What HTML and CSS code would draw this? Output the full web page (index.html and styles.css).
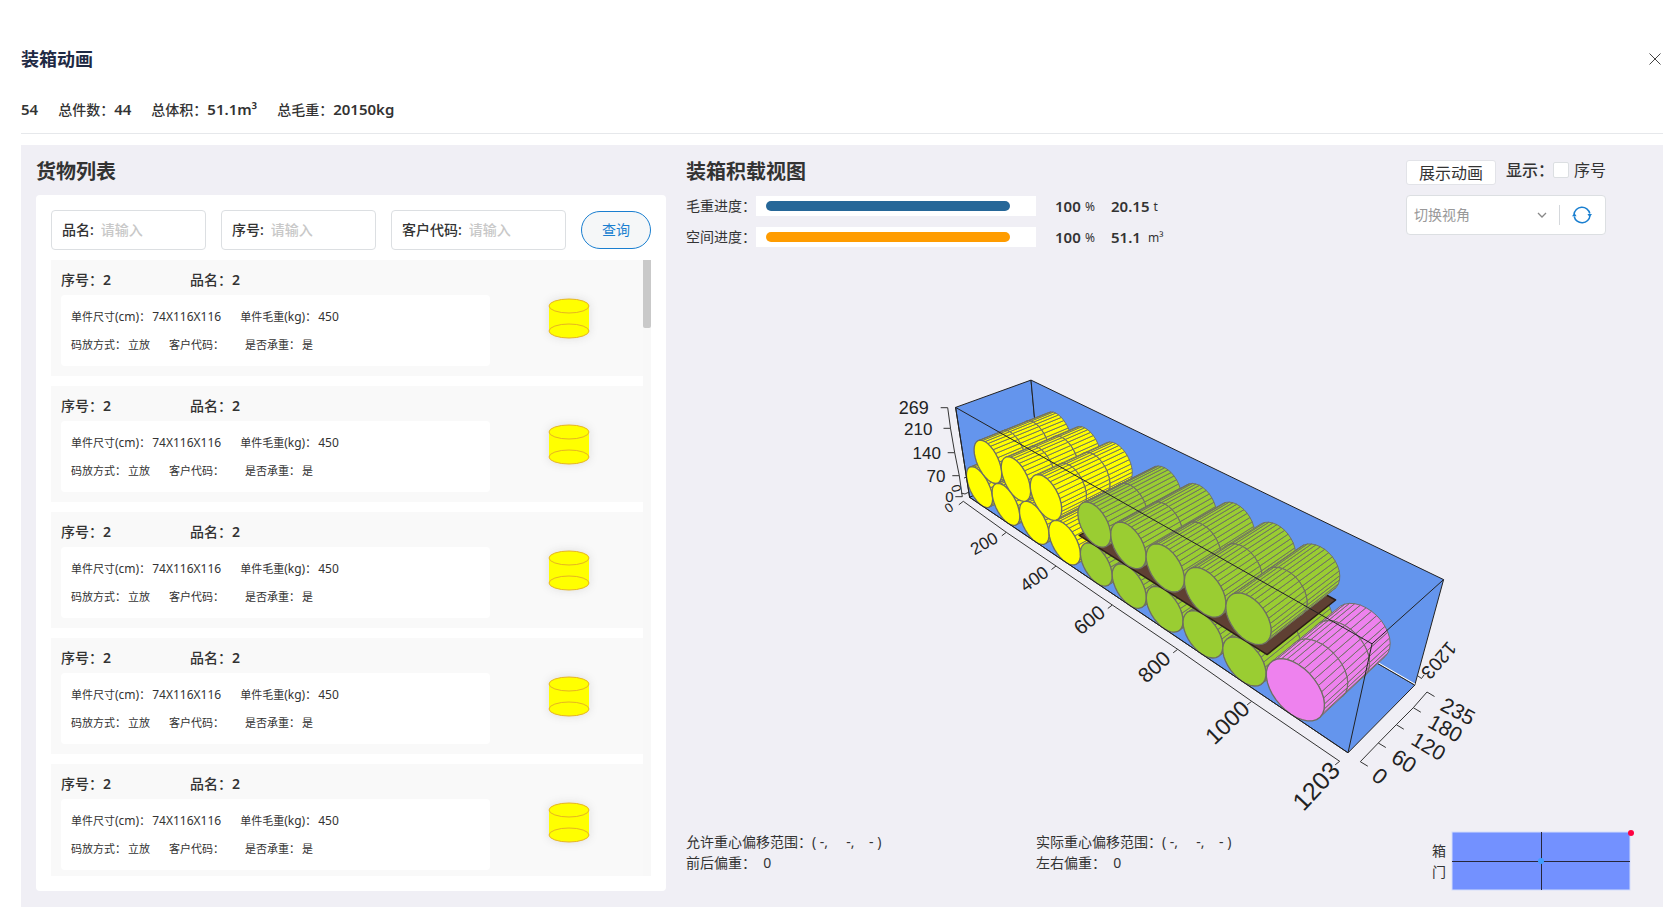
FILE: index.html
```
<!DOCTYPE html>
<html lang="zh-CN">
<head>
<meta charset="utf-8">
<title>装箱动画</title>
<link rel="stylesheet" href="styles.css">
</head>
<body>
<svg class="defs" aria-hidden="true">
  <symbol id="drum" viewBox="0 0 52 52">
    <path d="M6 14V38H46V14Z" fill="#ffff00"/>
    <ellipse cx="26" cy="13" rx="20" ry="7" fill="#ffff00" stroke="#e6b422"/>
    <ellipse cx="26" cy="38" rx="20" ry="7" fill="#ffff00" stroke="#e6b422"/>
  </symbol>
</svg>
<header class="header">
  <h1 class="title">装箱动画</h1>
  <button class="close" type="button" aria-label="关闭"><svg width="12" height="12" viewBox="0 0 12 12"><path d="M0.5 0.5 11.5 11.5M11.5 0.5 0.5 11.5" stroke="#444" fill="none"/></svg></button>
</header>
<div class="summary">
  <b>54</b>
  <span>总件数：<b>44</b></span>
  <span>总体积：<b>51.1m³</b></span>
  <span>总毛重：<b>20150kg</b></span>
</div>
<main class="panel">
  <section class="goods">
    <h2 class="heading">货物列表</h2>
    <div class="card">
      <form class="filters">
        <label class="field">品名:<input type="text" placeholder="请输入"></label>
        <label class="field">序号:<input type="text" placeholder="请输入"></label>
        <label class="field field-wide">客户代码:<input type="text" placeholder="请输入"></label>
        <button class="query" type="button">查询</button>
      </form>
      <div class="list-wrap">
        <ul class="list">
          <li class="item">
            <div class="item-main">
              <div class="item-head"><span>序号：<b>2</b></span><span>品名：<b>2</b></span></div>
              <div class="item-box">
                <p class="row"><span>单件尺寸<i>(cm)</i>：<i>74X116X116</i></span><span>单件毛重<i>(kg)</i>：<i>450</i></span></p>
                <p class="row"><span>码放方式：<em>立放</em></span><span class="customer">客户代码：</span><span>是否承重：<em>是</em></span></p>
              </div>
            </div>
            <svg class="drum"><use href="#drum"/></svg>
          </li>
          <li class="item">
            <div class="item-main">
              <div class="item-head"><span>序号：<b>2</b></span><span>品名：<b>2</b></span></div>
              <div class="item-box">
                <p class="row"><span>单件尺寸<i>(cm)</i>：<i>74X116X116</i></span><span>单件毛重<i>(kg)</i>：<i>450</i></span></p>
                <p class="row"><span>码放方式：<em>立放</em></span><span class="customer">客户代码：</span><span>是否承重：<em>是</em></span></p>
              </div>
            </div>
            <svg class="drum"><use href="#drum"/></svg>
          </li>
          <li class="item">
            <div class="item-main">
              <div class="item-head"><span>序号：<b>2</b></span><span>品名：<b>2</b></span></div>
              <div class="item-box">
                <p class="row"><span>单件尺寸<i>(cm)</i>：<i>74X116X116</i></span><span>单件毛重<i>(kg)</i>：<i>450</i></span></p>
                <p class="row"><span>码放方式：<em>立放</em></span><span class="customer">客户代码：</span><span>是否承重：<em>是</em></span></p>
              </div>
            </div>
            <svg class="drum"><use href="#drum"/></svg>
          </li>
          <li class="item">
            <div class="item-main">
              <div class="item-head"><span>序号：<b>2</b></span><span>品名：<b>2</b></span></div>
              <div class="item-box">
                <p class="row"><span>单件尺寸<i>(cm)</i>：<i>74X116X116</i></span><span>单件毛重<i>(kg)</i>：<i>450</i></span></p>
                <p class="row"><span>码放方式：<em>立放</em></span><span class="customer">客户代码：</span><span>是否承重：<em>是</em></span></p>
              </div>
            </div>
            <svg class="drum"><use href="#drum"/></svg>
          </li>
          <li class="item">
            <div class="item-main">
              <div class="item-head"><span>序号：<b>2</b></span><span>品名：<b>2</b></span></div>
              <div class="item-box">
                <p class="row"><span>单件尺寸<i>(cm)</i>：<i>74X116X116</i></span><span>单件毛重<i>(kg)</i>：<i>450</i></span></p>
                <p class="row"><span>码放方式：<em>立放</em></span><span class="customer">客户代码：</span><span>是否承重：<em>是</em></span></p>
              </div>
            </div>
            <svg class="drum"><use href="#drum"/></svg>
          </li>
        </ul>
        <div class="track"><div class="thumb"></div></div>
      </div>
    </div>
  </section>
  <section class="view">
    <div class="view-top">
      <div>
        <h2 class="heading">装箱积载视图</h2>
        <div class="meters">
          <div class="meter"><span class="meter-name">毛重进度：</span><div class="bar"><div class="fill weight"></div></div><b class="percent">100</b><small class="unit">%</small><b class="amount">20.15</b><small>t</small></div>
          <div class="meter"><span class="meter-name">空间进度：</span><div class="bar"><div class="fill volume"></div></div><b class="percent">100</b><small class="unit">%</small><b class="amount">51.1</b><small>m³</small></div>
        </div>
      </div>
      <div class="controls">
        <div class="controls-row">
          <button class="play" type="button">展示动画</button>
          <b class="show">显示：</b>
          <label class="check"><input type="checkbox">序号</label>
        </div>
        <div class="angle">
          <select class="angle-select" aria-label="切换视角"><option>切换视角</option></select>
          <svg class="chevron" width="10" height="6" viewBox="0 0 10 6"><path d="M1 1 5 5 9 1" fill="none" stroke="#888" stroke-width="1.3"/></svg>
          <button class="refresh" type="button" aria-label="刷新"><svg width="20" height="18" viewBox="0 0 20 18"><path d="M2 8.5A8 8 0 0 1 17.8 7.5M18 9.5A8 8 0 0 1 2.2 10.5" fill="none" stroke="#1a7fd0" stroke-width="1.5"/><path d="M0 10.3 2.4 7 4.6 10.3ZM15.4 8 17.6 11.3 20 8Z" fill="#1a7fd0"/></svg></button>
        </div>
      </div>
    </div>
    <div class="stage"><svg class="scene" id="scene" viewBox="854 370 640 450" width="640" role="img" aria-label="装箱三维视图"></svg></div>
    <footer class="balance">
      <div class="balance-col"><p>允许重心偏移范围：( -,&nbsp;&nbsp;&nbsp;&nbsp; -,&nbsp;&nbsp;&nbsp; - )</p><p>前后偏重：&nbsp; 0</p></div>
      <div class="balance-col"><p>实际重心偏移范围：( -,&nbsp;&nbsp;&nbsp;&nbsp; -,&nbsp;&nbsp;&nbsp; - )</p><p>左右偏重：&nbsp; 0</p></div>
      <div class="door"><span class="door-name">箱门</span>
        <svg width="184" height="64" viewBox="0 0 184 64"><rect x="2" y="5" width="178" height="58" fill="#7391ff" stroke="#d3ddfb"/><path d="M91.500 5V63M2 34.500H180" stroke="#26263a"/><circle cx="91" cy="34" r="3" fill="#409eff"/><circle cx="181" cy="6" r="3" fill="#ff0040"/></svg>
      </div>
    </footer>
  </section>
</main>
<script src="scene.js"></script>
</body>
</html>
```

FILE: styles.css
```
* { box-sizing: border-box; }
body { margin: 0; height: 100vh; display: flex; flex-direction: column; overflow: hidden; background: #fff; color: #333; font: 14px/20px "Noto Sans", "Noto Sans CJK SC", sans-serif; }
h1, h2, p, ul { margin: 0; padding: 0; }
button, input, select { font: inherit; color: inherit; }
i, em { font-style: normal; }
b { font-weight: 600; }
.defs { position: absolute; width: 0; height: 0; }
.header { display: flex; justify-content: space-between; align-items: center; padding: 44px 0 0 21px; }
.title { font-size: 18px; line-height: 30px; font-weight: 600; color: #1f2a44; }
.close { display: flex; border: 0; padding: 2px; background: none; }
.summary { display: flex; gap: 20px; align-items: center; margin-left: 21px; height: 60px; padding-top: 11px; border-bottom: 1px solid #e6e8eb; font-weight: 500; }
.summary b { font-size: 15px; }
.panel { flex: 1; min-height: 0; display: flex; gap: 20px; margin: 11px 0 0 21px; padding: 0 0 16px 15px; background: #f0eff5; }
.heading { height: 50px; padding-top: 1px; font-size: 20px; line-height: 52px; font-weight: 600; }
.goods { width: 630px; display: flex; flex-direction: column; min-height: 0; }
.card { flex: 1; min-height: 0; display: flex; flex-direction: column; gap: 10px; padding: 15px; background: #fff; border-radius: 4px; }
.filters { display: flex; gap: 15px; align-items: center; }
.field { display: flex; align-items: center; gap: 7px; flex: 1 1 155px; min-width: 0; height: 40px; padding-left: 10px; border: 1px solid #dcdfe2; border-radius: 4px; font-weight: 500; white-space: nowrap; }
.field-wide { flex-basis: 175px; }
.field input { flex: 1; min-width: 0; border: 0; padding: 0; outline: 0; background: none; }
.field input::placeholder { color: #c8c8c8; }
.query { width: 70px; height: 38px; border: 1px solid #1a7fd0; border-radius: 19px; background: #f5f7f8; color: #1a7fd0; }
.list-wrap { flex: 1; min-height: 0; display: flex; }
.list { flex: 1; list-style: none; overflow: hidden; display: flex; flex-direction: column; gap: 10px; }
.item { flex: none; display: flex; gap: 53px; padding: 10px; height: 116px; background: #f9f9f9; }
.item-main { width: 429px; display: flex; flex-direction: column; }
.item-head { flex: none; display: flex; height: 25px; font-weight: 500; }
.item-head span { width: 129px; }
.item-box { flex: 1; display: flex; flex-direction: column; padding: 8px 10px 7px; background: #fff; border-radius: 4px; }
.row { display: flex; gap: 19px; font-size: 11px; line-height: 28px; }
.row i { font-size: 12px; }
.row i:last-child, .row em { margin-left: 2px; }
.customer { width: 57px; }
.drum { width: 52px; height: 52px; margin-top: 23px; filter: drop-shadow(0 0 4px #ddd); }
.track { width: 8px; background: #f8f8f8; }
.thumb { height: 68px; background: #c9c9c9; border-radius: 0 0 2px 2px; }
.view { flex: 1; min-width: 0; display: flex; flex-direction: column; }
.view-top { display: flex; justify-content: space-between; padding-right: 57px; }
.meters { display: flex; flex-direction: column; gap: 11px; padding-top: 1px; }
.meter { display: flex; align-items: center; height: 20px; }
.meter-name { width: 70px; }
.bar { width: 280px; height: 20px; padding: 5px 26px 5px 10px; background: #fff; }
.fill { height: 10px; border-radius: 5px; }
.weight { background: #266798; }
.volume { background: #ff9c00; }
.meter b { font-size: 15px; }
.meter small { font-size: 12px; padding-top: 2px; }
.percent { margin-left: 19px; width: 30px; }
.unit { width: 26px; }
.amount { margin-right: 4px; min-width: 33px; }
.controls { width: 200px; padding-top: 14px; font-size: 16px; }
.controls-row { display: flex; align-items: center; height: 26px; }
.play { width: 90px; height: 25px; padding: 0; border: 1px solid #e2e3e8; border-radius: 3px; background: #fff; line-height: 24px; }
.show { margin-left: 10px; width: 47px; white-space: nowrap; font-weight: 500; line-height: 16px; padding-bottom: 4px; }
.check { display: flex; align-items: center; gap: 5px; white-space: nowrap; padding-bottom: 4px; }
.check input { appearance: none; width: 16px; height: 16px; margin: 0; border: 1px solid #dcdfe2; border-radius: 2px; background: #fff; }
.angle { display: flex; align-items: center; height: 40px; margin-top: 10px; padding-left: 7px; border: 1px solid #dcdfe2; border-radius: 4px; background: #fff; }
.angle-select { flex: 1; appearance: none; border: 0; padding: 0; outline: 0; background: none; color: #999; font-size: 14px; }
.chevron { margin-right: 12px; }
.refresh { display: flex; align-items: center; height: 20px; width: 46px; padding: 0 0 0 12px; border: 0; border-left: 1px solid #d5d8dc; background: none; }
.stage { flex: 1; min-height: 0; display: flex; justify-content: center; align-items: flex-end; padding-right: 1px; }
.scene { display: block; height: auto; margin-bottom: 8px; }
.balance { display: flex; align-items: flex-end; padding-right: 29px; line-height: 21px; }
.balance-col { width: 350px; padding-bottom: 18px; white-space: nowrap; }
.door { display: flex; align-items: center; gap: 4px; margin-left: auto; height: 64px; }
.door-name { width: 14px; padding-top: 4px; }
```

FILE: scene.js
```
// Container size in cm: length (x), depth (y), height (z)
const L = 1203, D = 235, H = 269;

// Container corners [x, y, z, screen x, screen y]
const corners = [
  [0, 0, H, 955.7, 408.7], [0, D, H, 1031, 380.7], [0, 0, 0, 969.5, 497.8],
  [L, 0, 0, 1348.3, 753.7], [L, 0, H, 1371.7, 645.3], [L, D, H, 1443.7, 580.3],
  [L, D, 0, 1414.7, 686], [0, D, 0, 1039, 468]
];

// Least-squares solution of the perspective camera for those corners
function solveCamera() {
  const A = Array.from({ length: 11 }, () => new Array(12).fill(0));
  const add = (r, v) => { for (let i = 0; i < 11; i++) { for (let j = 0; j < 11; j++) A[i][j] += r[i] * r[j]; A[i][11] += r[i] * v; } };
  for (const [x0, y0, z0, u0, v0] of corners) {
    const x = x0 / 1000, y = y0 / 1000, z = z0 / 1000, u = (u0 - 1200) / 250, v = (v0 - 570) / 250;
    add([x, y, z, 1, 0, 0, 0, 0, -u * x, -u * y, -u * z], u);
    add([0, 0, 0, 0, x, y, z, 1, -v * x, -v * y, -v * z], v);
  }
  for (let i = 0; i < 11; i++) {
    let p = i;
    for (let k = i + 1; k < 11; k++) if (Math.abs(A[k][i]) > Math.abs(A[p][i])) p = k;
    [A[i], A[p]] = [A[p], A[i]];
    for (let k = 0; k < 11; k++) {
      if (k === i) continue;
      const f = A[k][i] / A[i][i];
      for (let j = i; j < 12; j++) A[k][j] -= f * A[i][j];
    }
  }
  return A.map((r, i) => r[11] / r[i]);
}
const m = solveCamera();
function project(x, y, z) {
  x /= 1000; y /= 1000; z /= 1000;
  const w = m[8] * x + m[9] * y + m[10] * z + 1;
  return [(m[0] * x + m[1] * y + m[2] * z + m[3]) / w * 250 + 1200, (m[4] * x + m[5] * y + m[6] * z + m[7]) / w * 250 + 570];
}

const out = [];
const pts = list => list.map(p => p[0].toFixed(1) + ',' + p[1].toFixed(1)).join(' ');
const poly = (list, fill, stroke, width = 1) => out.push(`<polygon points="${pts(list)}" fill="${fill}" stroke="${stroke}" stroke-width="${width}" stroke-linejoin="round"/>`);
const line = (list, stroke = '#222', width = 1) => out.push(`<polyline points="${pts(list)}" fill="none" stroke="${stroke}" stroke-width="${width}"/>`);
const area = q => q.reduce((s, p, i) => { const n = q[(i + 1) % q.length]; return s + p[0] * n[1] - n[0] * p[1]; }, 0);

function cylinder(cx, cz, r, y0, y1, fill) {
  const N = 32, front = [], back = [];
  for (let i = 0; i < N; i++) {
    const a = i * 2 * Math.PI / N, x = cx + r * Math.cos(a), z = cz + r * Math.sin(a);
    front.push(project(x, y0, z));
    back.push(project(x, y1, z));
  }
  for (let i = 0; i < N; i++) {
    const j = (i + 1) % N, q = [front[i], back[i], back[j], front[j]];
    if (area(q) < 0) poly(q, fill, '#6e6e62', 0.9);
  }
  poly(front, fill, '#6e6e62', 1.3);
}
function stack(cx, cz, r, depth, count, fill) {
  for (let k = count - 1; k >= 0; k--) cylinder(cx, cz, r, k * depth, (k + 1) * depth, fill);
}

// Container inner faces
const P = project, blue = '#6495ed', edge = '#222';
poly([P(0, 0, 0), P(0, D, 0), P(0, D, H), P(0, 0, H)], blue, edge);
poly([P(0, D, 0), P(L, D, 0), P(L, D, H), P(0, D, H)], blue, edge);
poly([P(0, 0, 0), P(L, 0, 0), P(L, D, 0), P(0, D, 0)], blue, edge);
line([P(0, D, 2), P(L, D, 2)], '#fff', 1.5);
line([P(0, D, 0), P(L, D, 0)]);

// Cargo
const ry = 58, rg = 54.5, rp = 66, x0 = 464, xg = x0 + 10 * rg;
for (let i = 0; i < 4; i++) stack(ry + i * 2 * ry, ry, ry, 74, 3, '#ffff00');
for (let i = 0; i < 3; i++) stack(2 * ry + i * 2 * ry, ry + ry * Math.sqrt(3), ry, 74, 3, '#ffff00');
for (let i = 0; i < 5; i++) stack(x0 + rg + i * 2 * rg, rg, rg, 110, 2, '#9acd32');
const zp = 2 * rg, xe = xg - 3, dp = 224;
poly([P(x0, 0, zp), P(xe, 0, zp), P(xe, dp, zp), P(x0, dp, zp)], '#5f4033', '#2b1d17', 1.5);
for (let i = 0; i < 5; i++) stack(x0 + rg + i * 2 * rg, zp + 2 + rg, rg, 110, 2, '#9acd32');
stack(xg + rp, rp, rp, 74, 3, '#ee82ee');

// Front edges of the container
line([P(0, 0, H), P(L, 0, H), P(L, D, H)]);
line([P(L, 0, H), P(L, 0, 0)]);
line([P(0, 0, H), P(0, 0, 0), P(L, 0, 0)]);

// Axes: points along the axis and the tick direction
function axis(points, dx, dy) {
  line(points, '#333');
  for (const [x, y] of points) line([[x, y], [x + dx, y + dy]], '#333');
}
axis([[947.7, 408.7], [950.5, 429.3], [954.7, 453.7], [959.3, 476.7], [962.3, 497.7]], -7, 0);
axis([[963.3, 502.3], [1006.3, 533.3], [1056, 567], [1112.3, 606], [1177.7, 650.3], [1251.7, 702.3], [1339.7, 762.3]], -4.5, 3.5);
axis([[1360.3, 762.7], [1378.3, 744], [1396.3, 725.7], [1413.3, 708.7], [1427, 693]], 7.5, 4.5);
line([[1418, 677], [1421.5, 679.5], [1424, 676]], '#333');
line([[961, 494], [965, 495], [969, 493]], '#333');
line([[964, 479], [967, 478]], '#333');

// Axis labels: text, centre, rotation, size
const labels = [
  ['269', 913.7, 408.7, 0, 18], ['210', 918.3, 430, 0, 17], ['140', 926.7, 453.7, 0, 17], ['70', 936, 476.7, 0, 17], ['0', 949.3, 498.3, 0, 15],
  ['0', 948.7, 508.3, -35, 13], ['0', 956.7, 489.3, 75, 13],
  ['200', 984, 544.3, -29, 17], ['400', 1034.3, 580, -35, 18], ['600', 1089.3, 620.7, -39, 20],
  ['800', 1153.7, 667.3, -43, 21], ['1000', 1227.3, 723.3, -44, 23], ['1203', 1316, 786.7, -47, 25],
  ['0', 1380, 776.7, 40, 22], ['60', 1404.3, 761.7, 32, 22], ['120', 1429, 746.7, 31, 21], ['180', 1445.7, 728.7, 29, 21], ['235', 1458.3, 711.7, 28, 21],
  ['1203', 1439.3, 661.7, 131, 19]
];
for (const [t, x, y, a, s] of labels) out.push(`<text x="${x}" y="${y}" dy="${Math.round(s * 0.36)}" text-anchor="middle" transform="rotate(${a} ${x} ${y})" font-family="Liberation Sans, sans-serif" font-size="${s}" fill="#222">${t}</text>`);

document.getElementById('scene').innerHTML = out.join('');
```
